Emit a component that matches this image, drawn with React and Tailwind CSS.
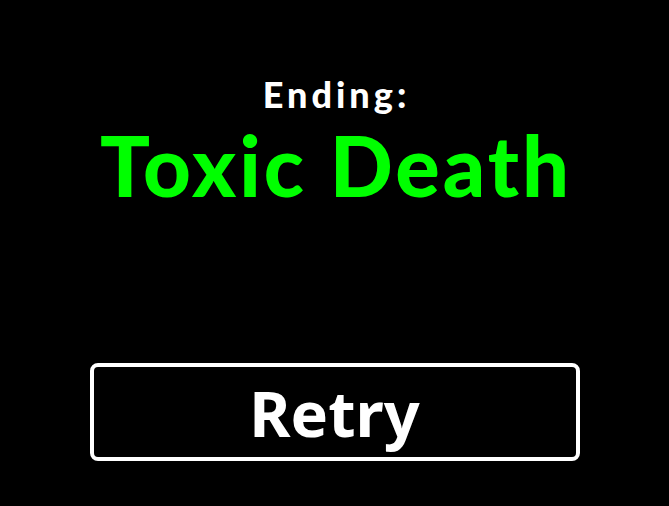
export default function App() {
    return (
        <div className="w-[669px] h-[506px] bg-black flex flex-col items-center overflow-hidden">
            {/* Ending title */}
            <div className="mt-[70px] pl-[4px] text-white text-[36px] leading-[48px] tracking-[4px] font-black font-['Lato',sans-serif]">Ending:</div>
            <div className="mt-[-3px] pl-[3px] text-[#00ff00] text-[83px] leading-[100px] tracking-[3px] font-black font-['Lato',sans-serif]">Toxic Death</div>
            {/* Retry button */}
            <button className="mt-[148px] w-[490px] h-[98px] border-4 border-white rounded-[8px] bg-black text-white text-[63px] font-bold font-['Noto_Sans',sans-serif] flex items-center justify-center leading-none">
                Retry
            </button>
        </div>
    )
}
